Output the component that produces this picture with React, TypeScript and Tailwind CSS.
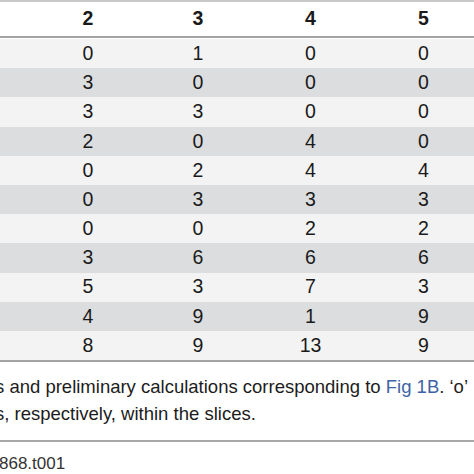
const header = ['2', '3', '4', '5']

const rows = [
  ['0', '1', '0', '0'],
  ['3', '0', '0', '0'],
  ['3', '3', '0', '0'],
  ['2', '0', '4', '0'],
  ['0', '2', '4', '4'],
  ['0', '3', '3', '3'],
  ['0', '0', '2', '2'],
  ['3', '6', '6', '6'],
  ['5', '3', '7', '3'],
  ['4', '9', '1', '9'],
  ['8', '9', '13', '9'],
]

const widths = ['w-[108px]', 'w-[112px]', 'w-[113px]', 'w-[113px]']

function Cells({ values, bold }: { values: string[]; bold?: boolean }) {
  return (
    <>
      <div className="w-[34px] shrink-0" />
      {values.map((v, i) => (
        <div key={i} className={`${widths[i]} shrink-0 text-center ${bold ? 'font-bold' : ''}`}>
          {v}
        </div>
      ))}
    </>
  )
}

export default function App() {
  return (
    <div className="w-[474px] h-[474px] overflow-hidden bg-white text-[#1a1a1a] font-['Liberation_Sans',Arial,sans-serif]">
      <div className="h-[2px] bg-[#c9c9c9]" />
      <div className="flex items-center h-[36px] text-[19.5px] border-b-2 border-[#a3a3a3]">
        <Cells values={header} bold />
      </div>
      <div className="h-[1px] bg-white" />
      <div className="border-b-2 border-[#a3a3a3]">
        {rows.map((r, i) => (
          <div
            key={i}
            className={`flex items-center h-[29.2px] text-[19.5px] ${i % 2 === 0 ? 'bg-[#f3f3f3]' : 'bg-[#dcdddf]'}`}
          >
            <Cells values={r} />
          </div>
        ))}
      </div>
      <div className="pt-[11px] pb-[13px] text-[18.5px] leading-[27px] whitespace-nowrap text-[#1c1c1c] border-b-2 border-[#a8a8a8]">
        <div className="ml-[-5px]">
          s and preliminary calculations corresponding to <span className="text-[#3d63a6]">Fig 1B</span>. ‘o’
        </div>
        <div className="ml-[-5px]">s, respectively, within the slices.</div>
      </div>
      <div className="pt-[10px] text-[17px] leading-[24px] text-[#333] whitespace-nowrap ml-[-1px]">868.t001</div>
    </div>
  )
}
